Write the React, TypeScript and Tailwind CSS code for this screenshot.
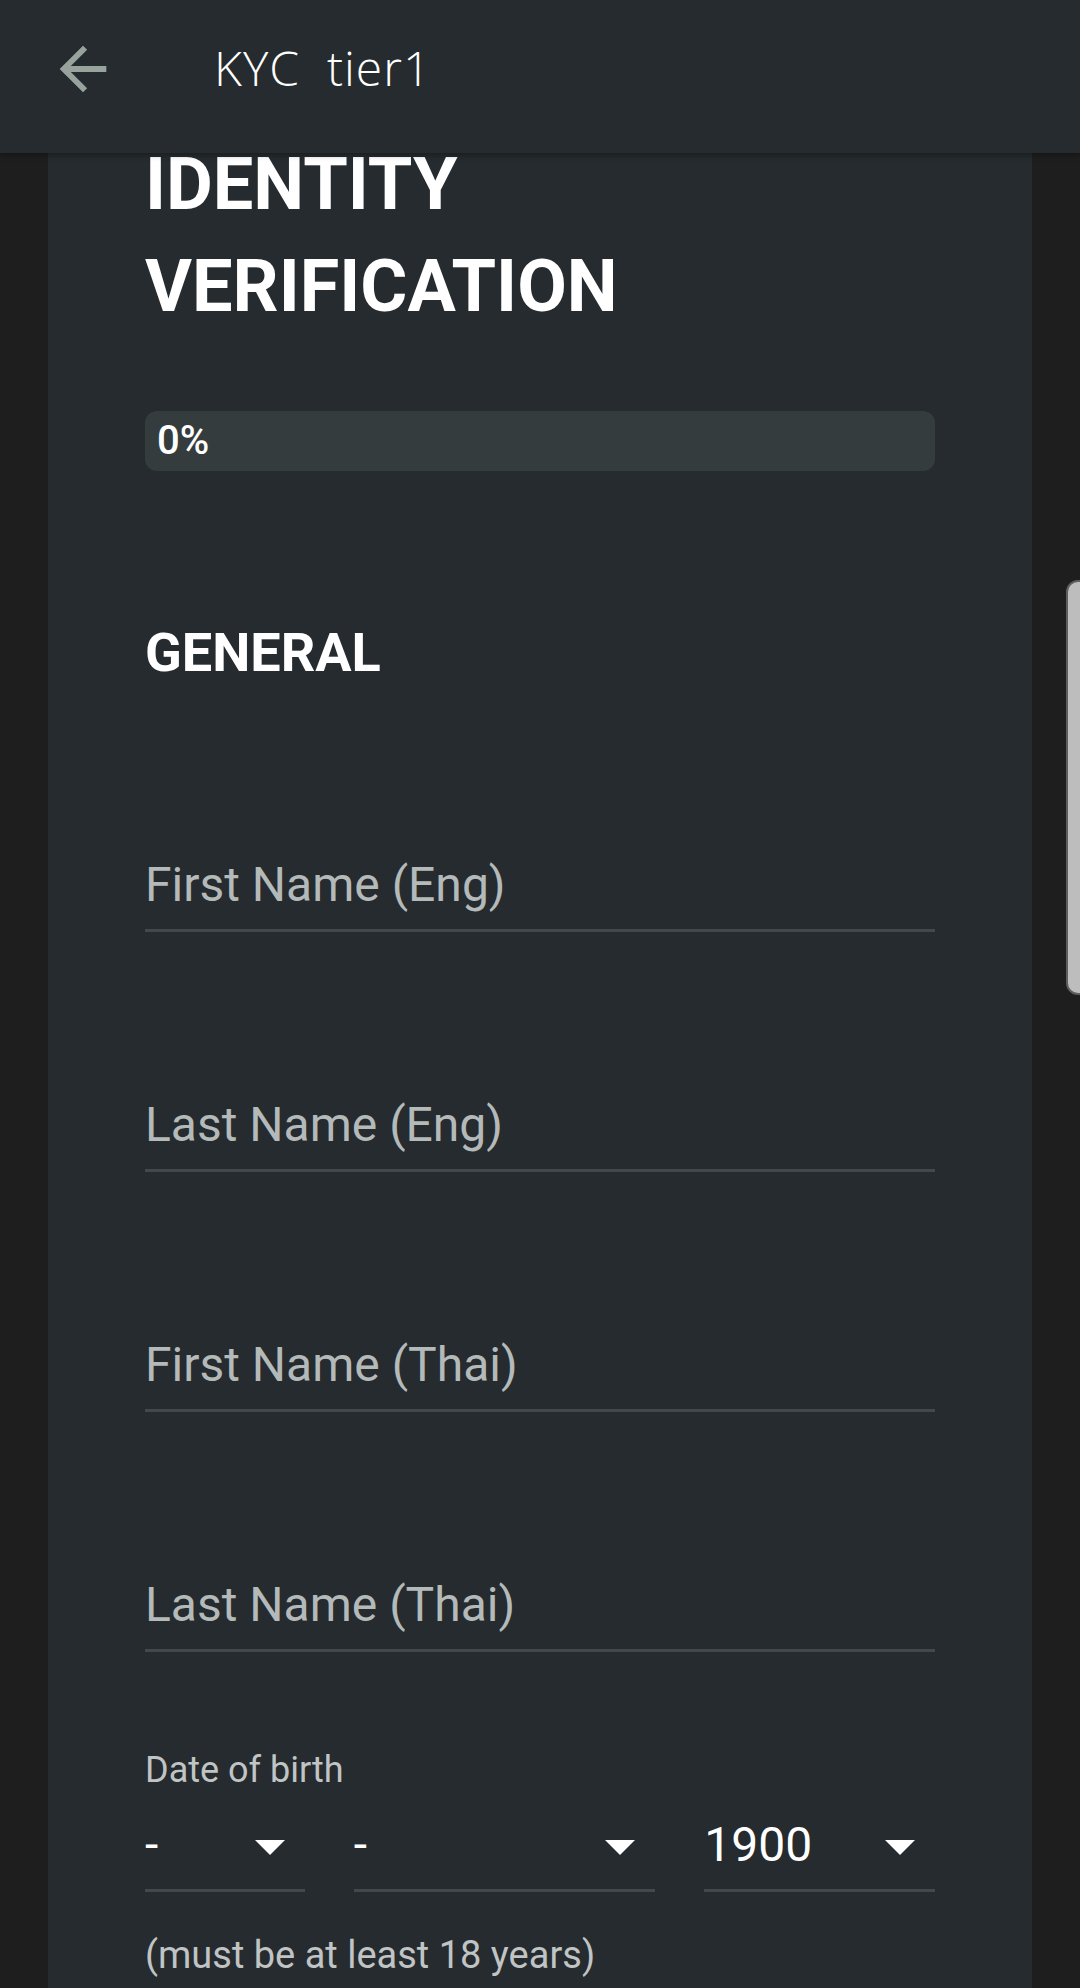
function Caret() {
  return (
    <svg width="30" height="15" viewBox="0 0 30 15" className="mt-1 shrink-0">
      <polygon points="0,0 30,0 15,15" fill="#ffffff" />
    </svg>
  );
}

function Field({ label, first }: { label: string; first?: boolean }) {
  return (
    <div
      className={`${first ? "mt-[173px]" : "mt-[165px]"} pb-[16px] border-b-[3px] border-[#43494b]`}
    >
      <div className="text-[48px] leading-[56px] text-[#b4b9b9]">{label}</div>
    </div>
  );
}

function Select({ value, width }: { value: string; width: string }) {
  return (
    <div className={`${width} flex items-center justify-between pb-[16px] pr-[20px] border-b-[3px] border-[#43494b]`}>
      <span className="text-[48px] leading-[56px] text-white">{value}</span>
      <Caret />
    </div>
  );
}

export default function App() {
  return (
    <div
      className="relative h-[1988px] w-[1080px] overflow-hidden bg-[#1e1e1e]"
      style={{ fontFamily: "Roboto, 'Liberation Sans', sans-serif" }}
    >
      <header className="absolute inset-x-0 top-0 z-10 flex h-[153px] items-start bg-[#252b2e] shadow-[0_2px_6px_rgba(0,0,0,0.35)]">
        <svg width="70" height="70" viewBox="0 0 24 24" className="ml-[48px] mt-[34px]">
          <path
            d="M20 11H7.83l5.59-5.59L12 4l-8 8 8 8 1.41-1.41L7.83 13H20v-2z"
            fill="#98a39d"
          />
        </svg>
        <h1
          className="ml-[96px] mt-[33px] text-[48px] font-light leading-[70px] tracking-[1px] text-white"
          style={{ fontFamily: "'Open Sans', sans-serif" }}
        >
          KYC&nbsp; tier1
        </h1>
      </header>

      <main className="ml-[48px] h-full w-[984px] bg-[#252b2e] pl-[97px] pr-[97px] pt-[134px]">
        <h2 className="text-[72px] font-bold leading-[102px] text-white">
          IDENTITY
          <br />
          VERIFICATION
        </h2>

        <div className="mt-[73px] flex h-[60px] items-center rounded-[12px] bg-[#353c3e] pl-[12px]">
          <span className="text-[40px] font-medium leading-[60px] text-white">0%</span>
        </div>

        <h3 className="mt-[151px] text-[54px] font-bold leading-[62px] text-white">GENERAL</h3>

        <Field label="First Name (Eng)" first />
        <Field label="Last Name (Eng)" />
        <Field label="First Name (Thai)" />
        <Field label="Last Name (Thai)" />

        <div className="mt-[97px] text-[36px] leading-[42px] text-[#c0c4c4]">Date of birth</div>
        <div className="mt-[26px] flex gap-[49px]">
          <Select value="-" width="w-[160px]" />
          <Select value="-" width="w-[302px]" />
          <Select value="1900" width="w-[231px]" />
        </div>
        <div className="mt-[40px] text-[38px] leading-[46px] text-[#c0c4c4]">
          (must be at least 18 years)
        </div>
      </main>

      <div className="absolute left-[1066px] top-[580px] h-[415px] w-[30px] rounded-[12px] border-2 border-[#5e5e5e] bg-[#bdbdbd]" />
    </div>
  );
}
